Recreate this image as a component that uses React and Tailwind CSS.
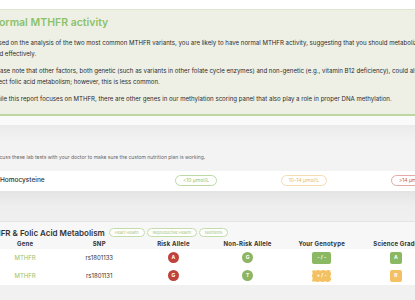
export default function App() {
  const rows = [
    { gene: 'MTHFR', snp: 'rs1801133', risk: 'A', safe: 'G', geno: '- / -', genoTone: 'good', grade: 'A' },
    { gene: 'MTHFR', snp: 'rs1801131', risk: 'G', safe: 'T', geno: '+ / -', genoTone: 'mid', grade: 'B' },
  ]

  return (
    <div className="w-[415px] h-[300px] overflow-hidden bg-[#f1f1f1] font-['Inter',sans-serif] text-[#333]">
      <div className="h-[9px] bg-white" />

      <section className="ml-[-9px] w-[470px] border-t border-[#dde7cf] border-b-2 border-b-[#bcd7a0] bg-[#eef0e6] pt-[7px] pb-[10px] pr-[20px]">
        <h2 className="text-[10.5px] leading-[12px] font-semibold text-[#8cc26a]">Normal MTHFR activity</h2>
        <div className="mt-[7.5px] text-[6.1px] leading-[11px] text-[#2a2a2a] w-[446px]">
          <p>Based on the analysis of the two most common MTHFR variants, you are likely to have normal MTHFR activity, suggesting that you should metabolize folic acid effectively.</p>
          <p className="mt-[6px]">Please note that other factors, both genetic (such as variants in other folate cycle enzymes) and non-genetic (e.g., vitamin B12 deficiency), could also affect folic acid metabolism; however, this is less common.</p>
          <p className="mt-[6px]">While this report focuses on MTHFR, there are other genes in our methylation scoring panel that also play a role in proper DNA methylation.</p>
        </div>
      </section>

      <div className="h-[9px] bg-[#fafafa]" />
      <div className="h-[16px] bg-gradient-to-b from-[#ebebeb] to-[#f3f3f3]" />

      <section className="bg-[#f3f3f3]">
        <p className="ml-[-8px] text-[5px] leading-[10px] text-[#666] pt-[11px] pb-[9px]">
          Discuss these lab tests with your doctor to make sure the custom nutrition plan is working.
        </p>
        <div className="flex items-center h-[20px] bg-white">
          <span className="w-[142px] shrink-0 text-[6.5px] font-medium text-[#333]">Homocysteine</span>
          <div className="w-[108px] flex justify-center shrink-0">
            <span className="h-[11px] px-[7px] rounded-full border border-[#bcd9a4] text-[5px] leading-[9px] text-[#8cc26a] whitespace-nowrap">&lt;10 μmol/L</span>
          </div>
          <div className="w-[108px] flex justify-center shrink-0">
            <span className="h-[11px] px-[7px] rounded-full border border-[#f3ddb0] text-[5px] leading-[9px] text-[#e8b85a] whitespace-nowrap">10–14 μmol/L</span>
          </div>
          <div className="w-[108px] flex justify-center shrink-0">
            <span className="h-[11px] px-[7px] rounded-full border border-[#e5a9a5] text-[5px] leading-[9px] text-[#c9504a] whitespace-nowrap">&gt;14 μmol/L</span>
          </div>
        </div>
      </section>

      <div className="h-[30px] bg-gradient-to-b from-[#e4e4e4] via-[#eeeeee] to-[#f0f0f0]" />

      <section className="border-t border-[#e4e4e4] bg-[#f7f7f7]">
        <div className="flex items-center ml-[-18px] h-[17px] pt-[5px]">
          <h3 className="text-[8px] leading-[10px] font-semibold text-[#333] whitespace-nowrap">MTHFR &amp; Folic Acid Metabolism</h3>
          <div className="flex gap-[2px] ml-[4px]">
            {['Heart Health', 'Reproductive Health', 'Nutrients'].map((tag) => (
              <span key={tag} className="h-[9px] px-[5px] rounded-full border border-[#c2dcaa] bg-white text-[4px] leading-[7px] text-[#9cc47c] whitespace-nowrap">{tag}</span>
            ))}
          </div>
        </div>
        <div className="grid grid-cols-6 w-[445px] ml-[-12px] h-[10px] items-center text-[6px] font-bold text-[#333] text-center tracking-[0.2px]">
          <span>Gene</span>
          <span>SNP</span>
          <span>Risk Allele</span>
          <span>Non-Risk Allele</span>
          <span>Your Genotype</span>
          <span>Science Grade</span>
        </div>
        <div className="bg-white">
          {rows.map((row) => (
            <div key={row.snp} className="grid grid-cols-6 w-[445px] ml-[-12px] h-[18px] items-center text-center text-[6px]">
              <span className="text-[#92c26e]">{row.gene}</span>
              <span className="text-[#333]">{row.snp}</span>
              <span className="flex justify-center">
                <span className="w-[11px] h-[11px] rounded-full bg-[#bf423c] text-white text-[5px] font-bold flex items-center justify-center">{row.risk}</span>
              </span>
              <span className="flex justify-center">
                <span className="w-[11px] h-[11px] rounded-full bg-[#8db563] text-white text-[5px] font-bold flex items-center justify-center">{row.safe}</span>
              </span>
              <span className="flex justify-center">
                <span className={row.genoTone === 'good'
                  ? 'w-[19px] h-[12px] rounded-[2px] bg-[#8bb862] text-white text-[5px] font-bold flex items-center justify-center'
                  : 'w-[19px] h-[12px] rounded-[2px] bg-[#f3c163] border border-dashed border-[#fbe2ab] text-white text-[5px] font-bold flex items-center justify-center'}>{row.geno}</span>
              </span>
              <span className="flex justify-center">
                <span className={row.grade === 'A'
                  ? 'w-[12px] h-[12px] rounded-[2px] bg-[#8bb862] text-white text-[5px] font-bold flex items-center justify-center'
                  : 'w-[12px] h-[12px] rounded-[2px] bg-[#f3c163] text-white text-[5px] font-bold flex items-center justify-center'}>{row.grade}</span>
              </span>
            </div>
          ))}
        </div>
      </section>
    </div>
  )
}
